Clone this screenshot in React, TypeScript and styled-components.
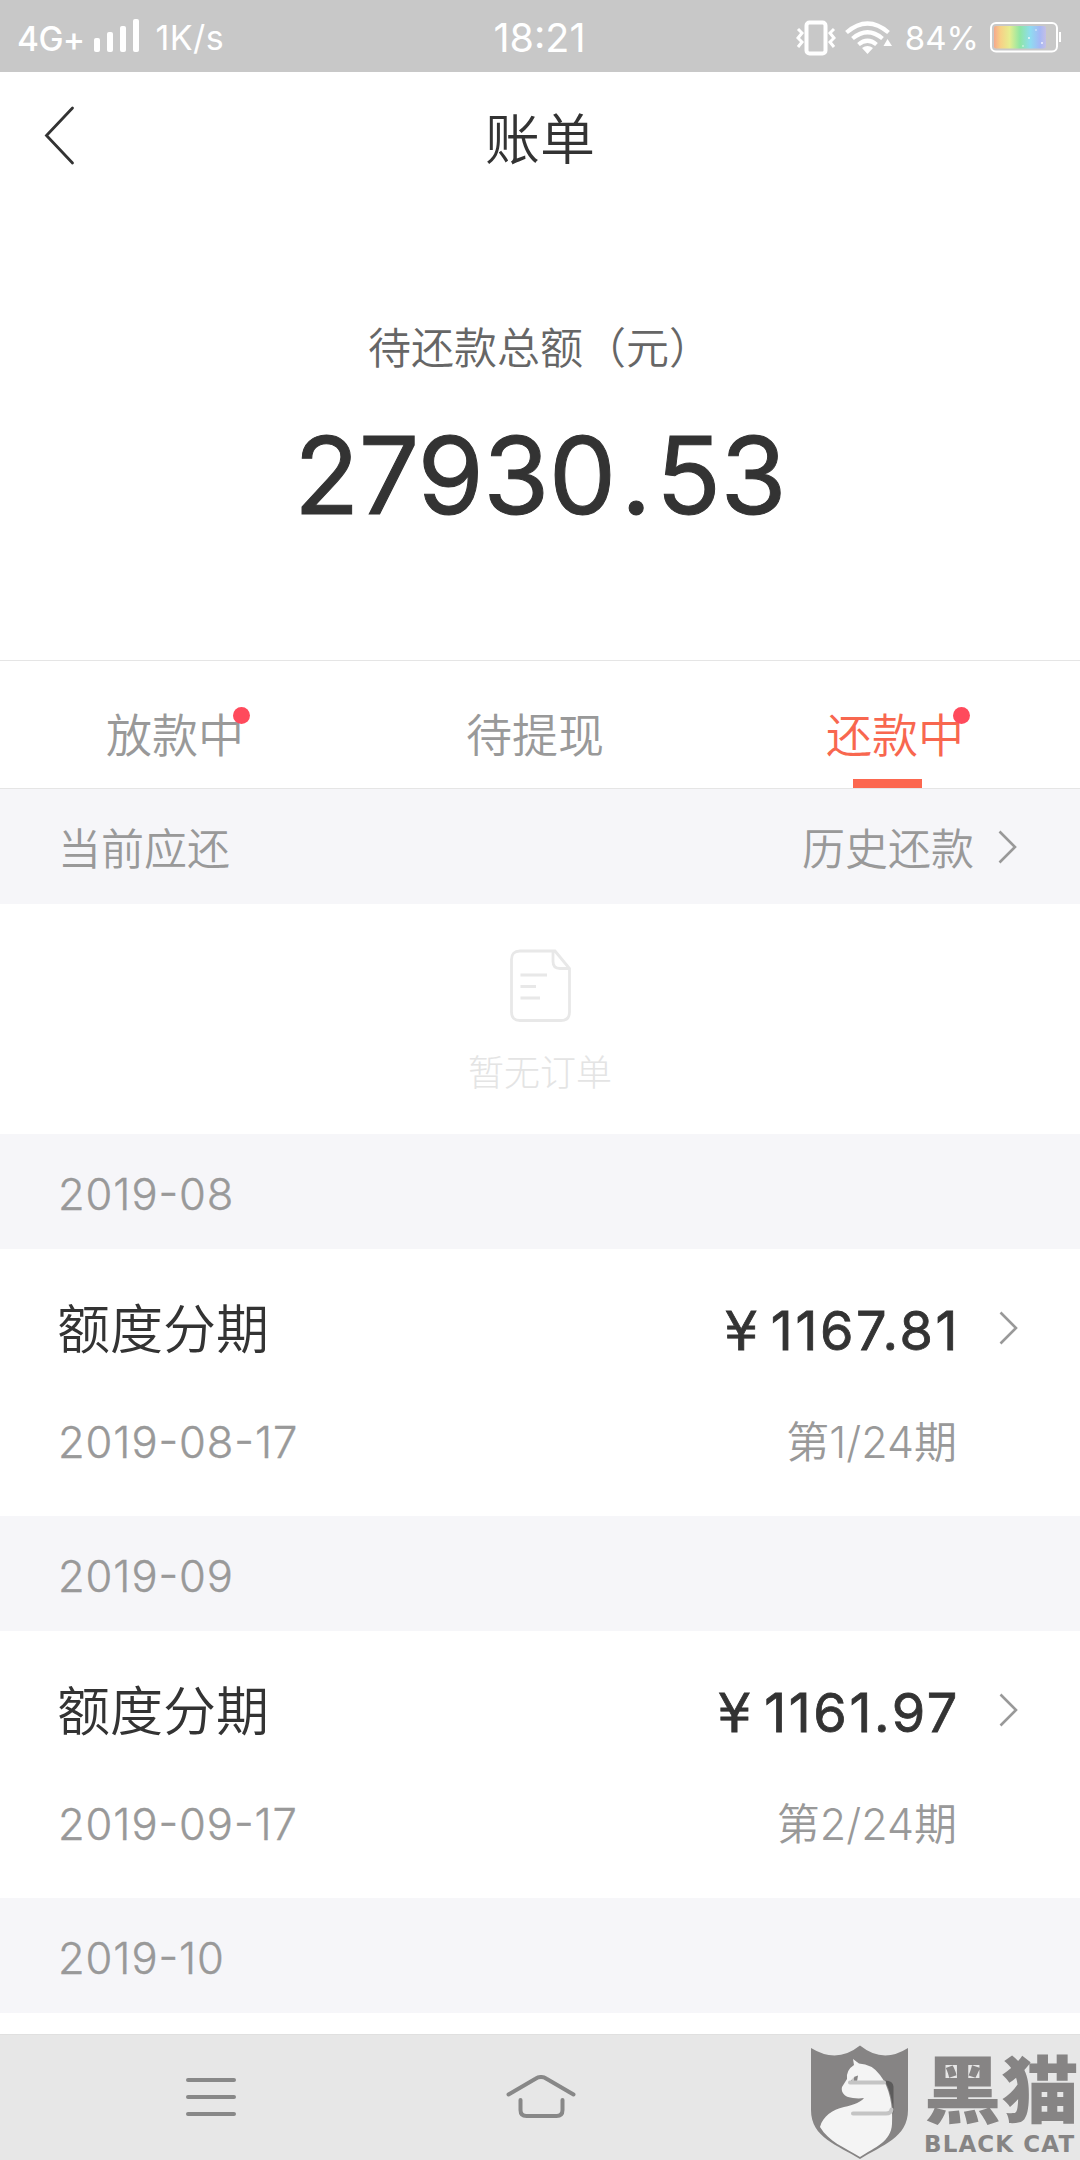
import React from 'react';
import styled, { createGlobalStyle } from 'styled-components';

const GlobalStyle = createGlobalStyle`
  * { box-sizing: border-box; }
  html, body { margin: 0; padding: 0; background: #fff; }
  body {
    font-family: Inter, 'Noto Sans CJK SC', sans-serif;
    font-weight: 350;
    color: #333;
    -webkit-font-smoothing: antialiased;
  }
`;

const Screen = styled.div`
  position: relative;
  display: flex;
  flex-direction: column;
  width: 1080px;
  height: 2160px;
  overflow: hidden;
  background: #fff;
`;

/* ---------- status bar ---------- */

const StatusBar = styled.header`
  display: grid;
  grid-template-columns: 1fr auto 1fr;
  align-items: center;
  height: 72px;
  padding: 3px 18px 0 17px;
  background: #c8c8c8;
  color: #fff;
  font-weight: 400;
  white-space: nowrap;
`;

const StatusGroup = styled.div<{ $end?: boolean }>`
  display: flex;
  align-items: center;
  justify-content: ${(p) => (p.$end ? 'flex-end' : 'flex-start')};
`;

const Network = styled.span`
  font-size: 33.5px;
  line-height: 40px;
  font-weight: 500;
  letter-spacing: -0.6px;
  padding-top: 3px;
`;

const SignalBars = styled.svg`
  margin: 0 17px 4px 8px;
`;

const Speed = styled.span`
  font-size: 34px;
  line-height: 40px;
  letter-spacing: 0.4px;
`;

const Clock = styled.span`
  font-size: 39.5px;
  line-height: 44px;
`;

const Percent = styled.span`
  margin: 0 11px 0 13px;
  font-size: 33px;
  line-height: 40px;
`;

/* ---------- title and total ---------- */

const TitleBar = styled.nav`
  display: grid;
  grid-template-columns: 120px 1fr 120px;
  align-items: center;
  height: 132px;
`;

const BackButton = styled.button`
  display: flex;
  padding: 0 0 4px 43px;
  border: 0;
  background: none;
`;

const Title = styled.h1`
  margin: 0;
  padding-top: 2px;
  font-size: 55px;
  line-height: 72px;
  font-weight: 350;
  text-align: center;
`;

const Total = styled.section`
  display: flex;
  flex-direction: column;
  align-items: center;
  height: 456px;
  padding-top: 114px;
`;

const TotalLabel = styled.p`
  margin: 0;
  font-size: 43px;
  line-height: 60px;
  color: #666;
`;

const TotalValue = styled.p`
  display: flex;
  margin: 37px 0 0;
  font-size: 107px;
  line-height: 120px;
  font-weight: 400;
  letter-spacing: -0.6px;
  -webkit-text-stroke: 1px currentColor;
`;

const Point = styled.span`
  padding: 0 5px;
`;

/* ---------- tabs ---------- */

const Tabs = styled.div`
  display: grid;
  grid-template-columns: repeat(3, 360px);
  height: 129px;
  border-top: 1px solid #e5e5e5;
  border-bottom: 1px solid #e5e5e5;
`;

const Tab = styled.div<{ $active?: boolean }>`
  display: flex;
  flex-direction: column;
  align-items: center;
  justify-content: space-between;
  padding: 41px 10px 0 0;
  color: ${(p) => (p.$active ? '#f8674f' : '#999')};
`;

const TabLabel = styled.span`
  position: relative;
  font-size: 46px;
  line-height: 66px;
`;

const Dot = styled.i`
  position: absolute;
  top: 5px;
  right: -6px;
  width: 17px;
  height: 17px;
  border-radius: 50%;
  background: #ff4a5c;
`;

const Underline = styled.i`
  width: 69px;
  height: 9px;
  margin-right: 15px;
  background: #fc674f;
`;

/* ---------- list ---------- */

const SectionBar = styled.div`
  display: flex;
  align-items: center;
  justify-content: space-between;
  height: 115px;
  padding: 4px 63px 0 58px;
  background: #f6f6f9;
  color: #999;
  font-size: 43px;
  line-height: 60px;
`;

const DateText = styled.span`
  font-size: 43.5px;
  line-height: 60px;
  color: #999;
  letter-spacing: 0.9px;
  font-feature-settings: 'case' 1;
  -webkit-text-stroke: 0.4px currentColor;
`;

const HistoryLink = styled.span`
  display: flex;
  align-items: center;
  gap: 24px;

  svg { margin-bottom: 4px; }
`;

const Empty = styled.div`
  display: flex;
  flex-direction: column;
  align-items: center;
  height: 230px;
  padding-top: 45px;
`;

const EmptyText = styled.span`
  margin-top: 26px;
  font-size: 36px;
  line-height: 50px;
  font-weight: 300;
  color: #e4e4e4;
`;

const Bill = styled.article`
  display: grid;
  grid-template-columns: 1fr auto 106px;
  grid-template-rows: 72px 60px;
  row-gap: 47px;
  height: 267px;
  padding: 44px 17px 0 58px;
  align-items: center;
`;

const BillName = styled.span`
  margin-left: -1px;
  padding-top: 1px;
  font-size: 53px;
  line-height: 72px;
`;

const Amount = styled.span`
  display: flex;
  align-items: baseline;
  justify-content: flex-end;
  gap: 10px;
  margin-right: -3px;
  padding-top: 3px;
  font-size: 54px;
  line-height: 72px;
  font-weight: 400;
  letter-spacing: 2.6px;
  -webkit-text-stroke: 0.8px currentColor;
`;

const Yen = styled.span`
  font-family: 'DejaVu Sans', sans-serif;
  font-size: 54px;
  line-height: 60px;
`;

const Term = styled.span`
  color: #999;
  font-size: 43px;
  line-height: 60px;
  text-align: right;
`;

const ChevronCell = styled.span`
  display: flex;
  justify-content: flex-end;
  padding: 0 45px 2px 0;
`;

/* ---------- navigation bar and logo ---------- */

const Spacer = styled.div`
  flex: 1;
`;

const NavBar = styled.footer`
  display: flex;
  align-items: flex-start;
  height: 126px;
  padding: 40px 0 0 184px;
  gap: 268px;
  border-top: 1px solid #e0e0e0;
  background: #e7e7e7;
`;

const Watermark = styled.div`
  position: absolute;
  left: 810px;
  bottom: 0;
  display: flex;
  gap: 14px;
  color: #868484;
`;

const Brand = styled.div`
  display: flex;
  flex-direction: column;
  white-space: nowrap;
`;

const BrandName = styled.span`
  font-family: 'Noto Sans CJK SC', sans-serif;
  font-weight: 900;
  font-size: 73px;
  line-height: 82px;
  transform: scaleX(1.06);
  transform-origin: left;
`;

const BrandLatin = styled.span`
  margin-top: 5px;
  font-family: 'DejaVu Sans', sans-serif;
  font-weight: 700;
  font-size: 23px;
  line-height: 26px;
  letter-spacing: 1.1px;
`;

const Chevron = () => (
  <svg width="19" height="34" viewBox="0 0 19 34" fill="none" stroke="#999" strokeWidth="2.6">
    <path d="M1.5 1.5 17 17 1.5 32.5" />
  </svg>
);

const BackIcon = () => (
  <svg width="32" height="60" viewBox="0 0 32 60" fill="none" stroke="#333" strokeWidth="2.8" strokeLinecap="round">
    <path d="M29.5 2 3.5 29.5 29.5 57" />
  </svg>
);

const Vibrate = styled.svg`
  margin-right: 9px;
`;

const VibrateIcon = () => (
  <Vibrate width="40" height="36" viewBox="0 0 40 36" fill="none" stroke="#fff">
    <rect x="10.5" y="2.5" width="19" height="31" rx="3" strokeWidth="4" />
    <path d="m2 9 4 4-4 5 4 4-4 5M38 9l-4 4 4 5-4 4 4 5" strokeWidth="3" />
  </Vibrate>
);

const Wifi = styled.svg`
  margin-right: -1px;
`;

const WifiIcon = () => (
  <Wifi width="48" height="34" viewBox="0 0 48 34" fill="none" stroke="#fff" strokeWidth="4.2">
    <path d="M1.5 11.5Q22.5-6.5 43.5 11.5M7.5 17.5Q22.5 5 37.5 17.5M13.5 23.5Q22.5 16 31.5 23.5" />
    <path d="M17 27q5.500-4 11 0l-5.500 6z" fill="#fff" stroke="none" />
    <path d="m42.5 18 4.5 7h-8.500z" fill="#fff" stroke="none" />
  </Wifi>
);

const BatteryIcon = () => (
  <svg width="72" height="32" viewBox="0 0 72 32" fill="none">
    <defs>
      <linearGradient id="charge">
        <stop offset="0" stopColor="#f5a98c" />
        <stop offset=".12" stopColor="#f8cf86" />
        <stop offset=".3" stopColor="#e6ee90" />
        <stop offset=".5" stopColor="#8ee6a4" />
        <stop offset=".7" stopColor="#8fdcf0" />
        <stop offset=".88" stopColor="#a5b8f6" />
        <stop offset="1" stopColor="#c4bfe6" />
      </linearGradient>
    </defs>
    <rect x="1" y="1" width="66" height="28.5" rx="5" stroke="#fff" strokeWidth="2" />
    <rect x="4" y="4" width="52" height="22.5" rx="2" fill="url(#charge)" />
    <path d="M70 10v10" stroke="#fff" strokeWidth="2" />
    <g fill="#fff" opacity=".8">
      <circle cx="39" cy="16" r="1" />
      <circle cx="46" cy="8" r=".8" />
      <circle cx="52" cy="21" r="1" />
      <circle cx="33" cy="24" r=".8" />
    </g>
  </svg>
);

const EmptyIcon = () => (
  <svg width="61" height="73" viewBox="0 0 61 73" fill="none" stroke="#e8e8e8" strokeWidth="2.8">
    <path d="M10 2h35L59.500 19.500V63q0 8.500-8.500 8.500H10q-8.500 0-8.500-8.500V10.500Q1.500 2 10 2zM43 2V12.500q0 7 7 7h9" />
    <path d="M10.5 26H37M10.5 37.5H26M10.5 49H30" />
  </svg>
);

const MenuIcon = () => (
  <svg width="54" height="46" viewBox="0 0 54 46" stroke="#888" strokeWidth="4" strokeLinecap="round">
    <path d="M4 5h46M4 22h46M4 39h46" />
  </svg>
);

const HomeIcon = () => (
  <svg width="72" height="46" viewBox="0 0 72 46" fill="none" stroke="#888" strokeWidth="4" strokeLinecap="round">
    <path d="m2.5 19.5 27-15.800q5.500-3.400 11 0l27 15.800" />
    <path d="M14.5 25v10q0 6 6 6h30q6 0 6-6V25" />
  </svg>
);

const CatShield = () => (
  <svg width="100" height="116" viewBox="0 0 100 116">
    <path
      d="M1 4Q27 20 50 1.500 73 20 98 4V66C98 94 72 101 50 115 28 101 1 94 1 66z"
      fill="#868484"
    />
    <path d="M75 36.5q8 0 8.500 6V70Q82 50 75 36.5z" fill="#5c5b5b" />
    <path
      d="M43 15 49 19.5Q62 20 70 31C80 44 83 62 82 80 81 98 65 103 50 113 34 103 19 98 10 83 13 72 22 66 34 63 44 61 51 58 54 54 48 55 42 54 38 53 33 51 31 47 32 43L37 35Q36 26 44 21z"
      fill="#f4f4f4"
    />
    <path d="M40 39Q42 33 48 31.5l-1 6z" fill="#868484" />
    <path d="M43 33.5v4" stroke="#f4f4f4" strokeWidth="1.2" />
    <path d="M40 38.500H74M43 69.500h33q5 0 5.500-4" stroke="#c4c4c4" strokeWidth="4" fill="none" strokeLinecap="round" />
  </svg>
);

const bills = [
  { month: '2019-08', amount: '1167.81', date: '2019-08-17', term: '第1/24期' },
  { month: '2019-09', amount: '1161.97', date: '2019-09-17', term: '第2/24期' },
];

const tabs = [
  { label: '放款中', dot: true },
  { label: '待提现' },
  { label: '还款中', dot: true, active: true },
];

export default function App() {
  return (
    <>
      <GlobalStyle />
      <Screen>
        <StatusBar>
          <StatusGroup>
            <Network>4G+</Network>
            <SignalBars width="46" height="33" viewBox="0 0 46 33" fill="#fff">
              <rect x="1" y="19" width="6" height="14" rx="2" />
              <rect x="14" y="13" width="6" height="20" rx="2" />
              <rect x="27" y="7" width="6" height="26" rx="2" />
              <rect x="40" y="0" width="6" height="33" rx="2" />
            </SignalBars>
            <Speed>1K/s</Speed>
          </StatusGroup>
          <Clock>18:21</Clock>
          <StatusGroup $end>
            <VibrateIcon />
            <WifiIcon />
            <Percent>84%</Percent>
            <BatteryIcon />
          </StatusGroup>
        </StatusBar>

        <TitleBar>
          <BackButton aria-label="返回">
            <BackIcon />
          </BackButton>
          <Title>账单</Title>
        </TitleBar>

        <Total>
          <TotalLabel>待还款总额（元）</TotalLabel>
          <TotalValue>
            27930<Point>.</Point>53
          </TotalValue>
        </Total>

        <Tabs>
          {tabs.map((tab) => (
            <Tab key={tab.label} $active={tab.active}>
              <TabLabel>
                {tab.label}
                {tab.dot && <Dot />}
              </TabLabel>
              {tab.active && <Underline />}
            </Tab>
          ))}
        </Tabs>

        <SectionBar>
          <span>当前应还</span>
          <HistoryLink>
            历史还款
            <Chevron />
          </HistoryLink>
        </SectionBar>
        <Empty>
          <EmptyIcon />
          <EmptyText>暂无订单</EmptyText>
        </Empty>

        {bills.map((bill) => (
          <React.Fragment key={bill.month}>
            <SectionBar>
              <DateText>{bill.month}</DateText>
            </SectionBar>
            <Bill>
              <BillName>额度分期</BillName>
              <Amount>
                <Yen>¥</Yen>
                {bill.amount}
              </Amount>
              <ChevronCell>
                <Chevron />
              </ChevronCell>
              <DateText>{bill.date}</DateText>
              <Term>{bill.term}</Term>
            </Bill>
          </React.Fragment>
        ))}
        <SectionBar>
          <DateText>2019-10</DateText>
        </SectionBar>
        <Spacer />

        <NavBar>
          <MenuIcon />
          <HomeIcon />
        </NavBar>
        <Watermark>
          <CatShield />
          <Brand>
            <BrandName>黑猫</BrandName>
            <BrandLatin>BLACK CAT</BrandLatin>
          </Brand>
        </Watermark>
      </Screen>
    </>
  );
}
